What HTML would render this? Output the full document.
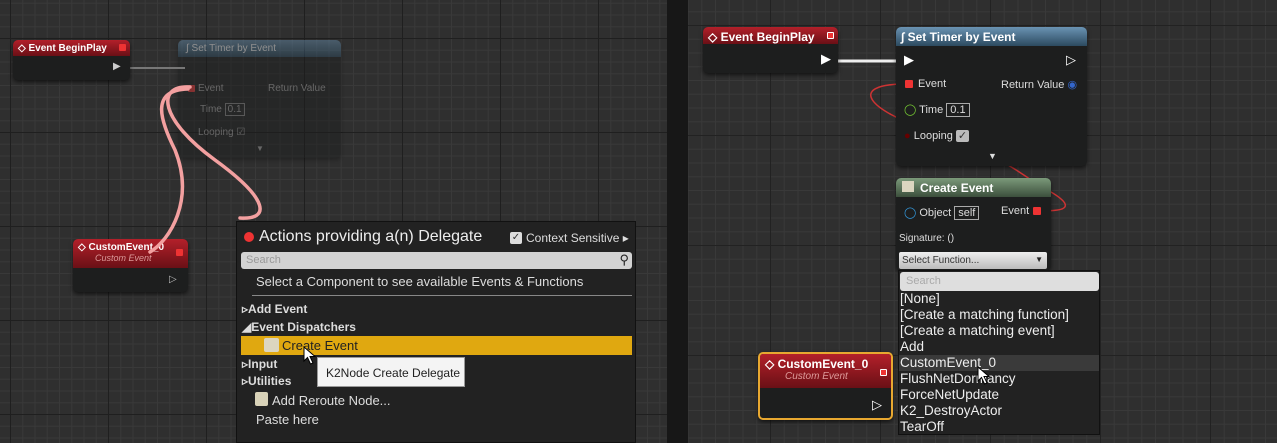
<!DOCTYPE html><html><head><meta charset="utf-8"><style>
*{margin:0;padding:0;box-sizing:border-box}
body{width:1277px;height:443px;overflow:hidden;background:#2e2e2e;font-family:"Liberation Sans",sans-serif;position:relative}
.g{position:absolute;top:0;height:443px}
.a{position:absolute}
.node{position:absolute;background:#1d1e1e;border-radius:5px;box-shadow:0 2px 4px rgba(0,0,0,.6)}
.hd{border-radius:5px 5px 0 0;color:#fff;font-weight:bold;font-size:11px;padding:3px 0 0 5px;position:relative;font-family:"Liberation Sans Narrow","Liberation Sans",sans-serif;white-space:nowrap}
.red{background:linear-gradient(#b3202a,#6a1016)}
.blue{background:linear-gradient(#6a93b3,#2c4a60)}
.green{background:linear-gradient(#7b9a7a,#3c4f3c)}
.t{position:absolute;color:#ddd;font-size:10px;white-space:nowrap}
.n{font-family:"Liberation Sans Narrow","Liberation Sans",sans-serif}
.sq{position:absolute;width:7px;height:7px;background:#e33;border-radius:1px}
</style></head><body>
<div class="g" style="left:0;width:667px;background-color:#2f2f2f;background-image:linear-gradient(90deg,#1f1f1f 1px,transparent 1px),linear-gradient(#1f1f1f 1px,transparent 1px),linear-gradient(90deg,#393939 1px,transparent 1px),linear-gradient(#393939 1px,transparent 1px);background-size:98px 94px,98px 94px,12.25px 11.75px,12.25px 11.75px;background-position:10px 38px,10px 38px,10px 38px,10px 38px"></div>
<div class="g" style="left:667px;width:21px;background:#171717"></div>
<div class="g" style="left:688px;width:589px;background-color:#2f2f2f;background-image:linear-gradient(90deg,#222 1px,transparent 1px),linear-gradient(#222 1px,transparent 1px),linear-gradient(90deg,#393939 1px,transparent 1px),linear-gradient(#393939 1px,transparent 1px);background-size:110px 110px,110px 110px,13.75px 13.75px,13.75px 13.75px;background-position:-28px 25px,-28px 25px,-28px 25px,-28px 25px"></div>

<!-- LEFT -->
<div class="node" style="left:178px;top:40px;width:163px;height:118px;opacity:.45">
<div class="hd blue" style="height:17px;font-weight:normal;font-size:10px;padding-left:8px">∫ Set Timer by Event</div>
<div class="t n" style="left:20px;top:43px;color:#aaa">Event</div><div class="sq" style="left:10px;top:45px"></div>
<div class="t n" style="left:90px;top:43px;color:#aaa">Return Value</div>
<div class="t n" style="left:22px;top:64px;color:#aaa">Time <span style="border:1px solid #888;padding:0 2px">0.1</span></div>
<div class="t n" style="left:20px;top:87px;color:#aaa">Looping ☑</div>
<div class="t" style="left:78px;top:104px;color:#aaa;font-size:8px">▼</div></div>
<div class="a" style="left:130px;top:67px;width:55px;height:2px;background:#777"></div>
<div class="node" style="left:13px;top:40px;width:117px;height:40px">
<div class="hd red" style="height:16px;font-size:10px">◇ Event BeginPlay</div>
<div class="sq" style="left:106px;top:4px"></div>
<div class="t" style="left:100px;top:21px;color:#ccc">▶</div></div>
<div class="node" style="left:73px;top:239px;width:115px;height:53px">
<div class="hd red" style="height:29px;font-size:10px">◇ CustomEvent_0<div style="font-weight:normal;font-style:italic;color:#d99;font-size:9px;padding-left:17px">Custom Event</div></div>
<div class="sq" style="left:103px;top:10px"></div>
<div class="t" style="left:96px;top:35px;color:#bbb">▷</div></div>
<svg class="a" style="left:0;top:0" width="667" height="443"><g fill="none" stroke="#f3a0a0" stroke-width="3.5" stroke-linecap="round">
<path d="M188 89 C150 90 160 120 175 150 C195 200 170 240 150 252"/>
<path d="M190 87 C155 85 160 120 215 160 C270 200 270 220 240 218"/></g></svg>

<div class="a" style="left:236px;top:221px;width:400px;height:222px;background:#222;border:1px solid #111">
<div class="a" style="left:7px;top:10px;width:10px;height:10px;border-radius:50%;background:#e33"></div>
<div class="t n" style="left:22px;top:6px;font-size:16px;color:#eee">Actions providing a(n) Delegate</div>
<div class="a" style="left:273px;top:10px;width:12px;height:12px;background:#ddd;border-radius:2px;color:#333;font-size:10px;line-height:12px;text-align:center">✓</div>
<div class="t n" style="left:289px;top:9px;font-size:12px">Context Sensitive ▸</div>
<div class="a" style="left:4px;top:30px;width:391px;height:17px;background:#d2d2d2;border-radius:3px"><span class="t" style="left:5px;top:2px;color:#999;font-size:11px">Search</span><span class="t" style="right:3px;top:0;color:#222;font-size:13px">⚲</span></div>
<div class="t n" style="left:19px;top:52px;font-size:13px">Select a Component to see available Events &amp; Functions</div>
<div class="a" style="left:15px;top:73px;width:380px;height:1px;background:#888"></div>
<div class="t n" style="left:5px;top:80px;font-size:12px;font-weight:bold">▹Add Event</div>
<div class="t n" style="left:5px;top:98px;font-size:12px;font-weight:bold">◢Event Dispatchers</div>
<div class="a" style="left:4px;top:114px;width:391px;height:19px;background:#e0a810"></div>
<div class="a" style="left:27px;top:116px;width:15px;height:14px;background:#dcd6c0;border-radius:2px"></div>
<div class="t n" style="left:45px;top:116px;font-size:13px;color:#222">Create Event</div>
<div class="t n" style="left:5px;top:135px;font-size:12px;font-weight:bold">▹Input</div>
<div class="t n" style="left:5px;top:152px;font-size:12px;font-weight:bold">▹Utilities</div>
<div class="a" style="left:80px;top:135px;width:148px;height:30px;background:#f4f4f4;border:1px solid #999"><span class="t n" style="left:8px;top:8px;color:#222;font-size:12px">K2Node Create Delegate</span></div>
<div class="a" style="left:18px;top:170px;width:13px;height:14px;background:#d8d2b8;border-radius:2px"></div>
<div class="t n" style="left:35px;top:171px;font-size:13px">Add Reroute Node...</div>
<div class="t n" style="left:19px;top:190px;font-size:13px">Paste here</div>
</div>
<svg class="a" style="left:303px;top:346px" width="14" height="20"><path d="M1 1 V15 L4.5 11.5 L7.5 18 L10 17 L7 10.5 H12 Z" fill="#fff" stroke="#000" stroke-width="1"/></svg>

<!-- RIGHT -->
<svg class="a" style="left:688px;top:0" width="589" height="443"><g fill="none">
<path d="M150 61 H215" stroke="#eee" stroke-width="3"/>
<path d="M215 84 C160 85 180 110 240 130 C300 150 330 170 350 185 C400 210 370 212 350 210" stroke="#c33" stroke-width="1.5"/></g></svg>
<div class="node" style="left:703px;top:27px;width:135px;height:46px">
<div class="hd red" style="height:17px;font-size:12px">◇ Event BeginPlay</div>
<div class="sq" style="left:124px;top:5px;border:1px solid #fff"></div>
<div class="t" style="left:118px;top:24px;color:#fff;font-size:13px">▶</div></div>
<div class="node" style="left:896px;top:27px;width:191px;height:139px">
<div class="hd blue" style="height:19px;font-size:12px">∫ Set Timer by Event</div>
<div class="t" style="left:8px;top:25px;color:#fff;font-size:13px">▶</div>
<div class="t" style="left:170px;top:25px;color:#fff;font-size:13px">▷</div>
<div class="sq" style="left:9px;top:53px;width:8px;height:8px"></div>
<div class="t n" style="left:22px;top:51px;font-size:11px">Event</div>
<div class="t n" style="left:105px;top:51px;font-size:11px">Return Value <span style="color:#36c">◉</span></div>
<div class="t n" style="left:8px;top:76px;font-size:11px"><span style="color:#7c3">◯</span> Time <span style="border:1px solid #aaa;padding:0 3px">0.1</span></div>
<div class="t n" style="left:8px;top:102px;font-size:11px"><span style="color:#600">●</span> Looping <span style="background:#bbb;color:#333;padding:0 2px;border-radius:2px">✓</span></div>
<div class="t" style="left:92px;top:124px;color:#ddd;font-size:9px">▼</div></div>
<div class="node" style="left:896px;top:178px;width:155px;height:92px">
<div class="hd green" style="height:19px;font-size:12px;padding-left:24px">Create Event</div>
<div class="a" style="left:6px;top:3px;width:12px;height:11px;background:#dcd6c0"></div>
<div class="t n" style="left:8px;top:28px;font-size:11px"><span style="color:#39d">◯</span> Object <span style="border:1px solid #aaa;padding:0 3px">self</span></div>
<div class="t n" style="left:105px;top:27px;font-size:11px">Event</div><div class="sq" style="left:137px;top:29px;width:8px;height:8px"></div>
<div class="t n" style="left:3px;top:55px;font-size:10px">Signature: ()</div>
<div class="a" style="left:3px;top:74px;width:148px;height:17px;background:linear-gradient(#eee,#bbb);border-radius:2px"><span class="t n" style="left:3px;top:3px;color:#333;font-size:10px">Select Function...</span><span class="t" style="right:4px;top:3px;color:#222;font-size:8px">▼</span></div></div>
<div class="a" style="left:898px;top:270px;width:202px;height:165px;background:#222;border:1px solid #111">
<div class="a" style="left:1px;top:1px;width:199px;height:19px;background:#dedede;border-radius:3px"><span class="t" style="left:6px;top:3px;color:#aaa;font-size:11px">Search</span></div>
<div class="a" style="left:0;top:84px;width:200px;height:16px;background:#3a3a3a"></div>
<div class="a n" style="left:1px;top:20px;color:#eee;font-size:13.5px;line-height:16px;white-space:nowrap">[None]<br>[Create a matching function]<br>[Create a matching event]<br>Add<br>CustomEvent_0<br>FlushNetDormancy<br>ForceNetUpdate<br>K2_DestroyActor<br>TearOff</div></div>
<svg class="a" style="left:977px;top:366px" width="14" height="20"><path d="M1 1 V15 L4.5 11.5 L7.5 18 L10 17 L7 10.5 H12 Z" fill="#fff" stroke="#000" stroke-width="1"/></svg>
<div class="node" style="left:758px;top:352px;width:135px;height:68px;border:2px solid #e8a830">
<div class="hd red" style="height:34px;font-size:12px;border-radius:3px 3px 0 0">◇ CustomEvent_0<div style="font-weight:normal;font-style:italic;color:#d99;font-size:10px;padding-left:20px">Custom Event</div></div>
<div class="sq" style="left:120px;top:15px;border:1px solid #fff"></div>
<div class="t" style="left:112px;top:43px;color:#fff;font-size:13px">▷</div></div>
</body></html>
